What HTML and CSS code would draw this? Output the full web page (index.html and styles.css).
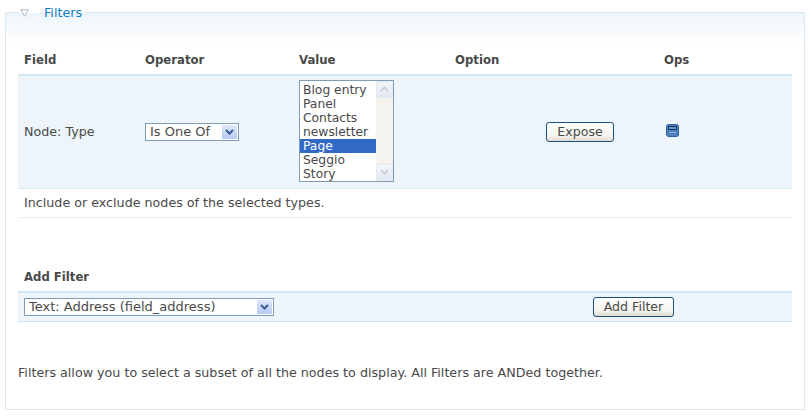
FILE: index.html
```html
<!DOCTYPE html>
<html lang="en">
<head>
<meta charset="utf-8">
<title>Filters</title>
<link rel="stylesheet" href="styles.css">
</head>
<body>
<fieldset class="panel">
  <legend class="panel-legend">
    <svg class="twisty" width="9" height="8" viewBox="0 0 9 8"><path d="M.7.7h7.6L4.5 7.2z" fill="#fff" stroke="#b4b8bb"/></svg>
    <a class="panel-title">Filters</a>
  </legend>
  <table class="grid filters">
    <colgroup><col class="c1"><col class="c2"><col class="c3"><col class="c4"><col class="c5"><col></colgroup>
    <thead>
      <tr><th>Field</th><th>Operator</th><th>Value</th><th>Option</th><th></th><th>Ops</th></tr>
    </thead>
    <tbody>
      <tr class="main-row">
        <td>Node: Type</td>
        <td>
          <div class="select select-op"><span class="select-text">Is One Of</span><span class="arrow"><svg width="9" height="6" viewBox="0 0 9 6"><path d="M1 1l3.5 3.5L8 1" fill="none" stroke="#3c5a96" stroke-width="2"/></svg></span></div>
        </td>
        <td>
          <div class="listbox">
            <ul class="options">
              <li>Blog entry</li><li>Panel</li><li>Contacts</li><li>newsletter</li><li class="selected">Page</li><li>Seggio</li><li>Story</li>
            </ul>
            <div class="scrollbar">
              <span class="sb-btn"><svg width="9" height="6" viewBox="0 0 9 6"><path d="M1 5l3.5-3.5L8 5" fill="none" stroke="#c3cbd0" stroke-width="1.6"/></svg></span>
              <span class="sb-btn"><svg width="9" height="6" viewBox="0 0 9 6"><path d="M1 1l3.5 3.5L8 1" fill="none" stroke="#c3cbd0" stroke-width="1.6"/></svg></span>
            </div>
          </div>
        </td>
        <td></td>
        <td><button class="btn btn-expose" type="button">Expose</button></td>
        <td class="ops">
          <svg class="save" width="13" height="13" viewBox="0 0 13 13"><rect x=".5" y=".5" width="12" height="12" rx="2" fill="#4f80bd" stroke="#2e5f9e"/><rect x="2.5" y="2.5" width="8" height="3" fill="#6d97cc" stroke="#16365f"/><rect x="3" y="8" width="7" height="1" fill="#8fb2dc"/></svg>
        </td>
      </tr>
      <tr class="help-row"><td colspan="6">Include or exclude nodes of the selected types.</td></tr>
    </tbody>
  </table>
  <table class="grid add">
    <colgroup><col class="a1"><col></colgroup>
    <thead><tr><th colspan="2">Add Filter</th></tr></thead>
    <tbody>
      <tr class="main-row">
        <td>
          <div class="select select-add"><span class="select-text">Text: Address (field_address)</span><span class="arrow"><svg width="9" height="6" viewBox="0 0 9 6"><path d="M1 1l3.5 3.5L8 1" fill="none" stroke="#3c5a96" stroke-width="2"/></svg></span></div>
        </td>
        <td><button class="btn btn-add" type="button">Add Filter</button></td>
      </tr>
    </tbody>
  </table>
  <p class="note">Filters allow you to select a subset of all the nodes to display. All Filters are ANDed together.</p>
</fieldset>
</body>
</html>
```

FILE: styles.css
```css
* { box-sizing: border-box; }
html, body { margin: 0; padding: 0; background: #fff; }
body {
  font-family: "DejaVu Sans", sans-serif;
  font-size: 12.7px;
  color: #494949;
  height: 417px;
  overflow: hidden;
  padding: 5px 6px 0 5px;
}
.panel {
  margin: 0;
  padding: 0 13px 0 12px;
  height: 405px;
  border: 1px solid #dce9f1;
  background: linear-gradient(#eef5fa, #fff 33px) no-repeat;
  min-width: 0;
}
.panel-legend {
  margin-left: 0;
  padding: 0 3px 0 2px;
  height: 15px;
  line-height: 15px;
  display: flex;
  align-items: center;
  background: transparent;
}
.twisty { display: block; margin-right: 15px; }
.panel-title { color: #0b7bc1; font-size: 12.7px; }
.grid { width: 774px; border-collapse: collapse; table-layout: fixed; }
.grid th {
  text-align: left;
  font-weight: bold;
  font-size: 11.7px;
  color: #494949;
  padding: 0 6px;
  border-bottom: 2px solid #d3e7f4;
}
.grid td { padding: 0 6px; }
.filters { margin-top: 26px; }
.filters th { height: 29px; }
.c1 { width: 121px; }
.c2 { width: 154px; }
.c3 { width: 156px; }
.c4 { width: 91px; }
.c5 { width: 118px; }
.main-row td { background: #edf5fb; border-bottom: 1px solid #d3e7f4; }
.filters .main-row td { height: 113px; }
.help-row td { height: 29px; border-bottom: 1px solid #e3eef5; background: #fff; }
.select {
  display: flex;
  align-items: center;
  justify-content: space-between;
  background: #fff;
  border: 1px solid #7f9db9;
  height: 18px;
  padding: 0 1px 0 4px;
  line-height: 15px;
  font-size: 13px;
}
.select-op { width: 94px; }
.select-add { width: 250px; }
.select-text { white-space: nowrap; }
.arrow {
  display: flex;
  align-items: center;
  justify-content: center;
  width: 15px;
  height: 14px;
  background: linear-gradient(#dfe8fb, #b6c9f3);
  border-radius: 1px;
}
.listbox {
  display: flex;
  width: 95px;
  height: 102px;
  margin-bottom: 2px;
  background: #fff;
  border: 1px solid #7f9db9;
}
.options {
  list-style: none;
  margin: 0;
  padding: 2px 0 0;
  flex: 1;
  min-width: 0;
  font-size: 12.3px;
}
.options li { height: 14px; line-height: 14px; padding-left: 3px; white-space: nowrap; }
.options .selected { background: #316ac5; color: #fff; }
.scrollbar {
  width: 17px;
  display: flex;
  flex-direction: column;
  justify-content: space-between;
  background: #f5f3ed;
}
.sb-btn {
  display: flex;
  align-items: center;
  justify-content: center;
  height: 17px;
  background: linear-gradient(#f3f6fb, #e1e8f0);
  border: 1px solid #e4e9ef;
  border-radius: 2px;
}
.btn {
  font-family: "DejaVu Sans", sans-serif;
  font-size: 12.6px;
  color: #494949;
  height: 20px;
  padding: 0;
  border: 1px solid #1c4f82;
  border-radius: 3px;
  background: linear-gradient(#fff, #f5f4ee 70%, #dedccf);
  display: block;
}
.btn-expose { width: 68px; }
.btn-add { width: 81px; margin-left: -6px; }
.ops { vertical-align: middle; }
.save { display: block; margin: 0 0 3px 2px; }
.add { margin-top: 47px; }
.add th { height: 27px; padding-bottom: 2px; }
.add .main-row td { height: 30px; }
.a1 { width: 575px; }
.note { margin: 43px 0 0; line-height: 15px; color: #494949; }
```
